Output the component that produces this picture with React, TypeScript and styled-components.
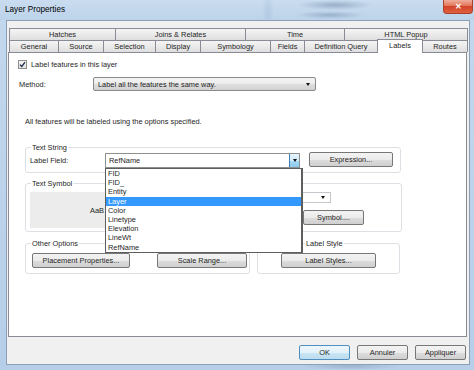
import React from "react";
import styled, { createGlobalStyle, css } from "styled-components";

const GlobalStyle = createGlobalStyle`
  html, body { margin: 0; padding: 0; }
  body {
    font-family: "Liberation Sans", Arial, sans-serif;
    font-size: 7.4px;
    color: #1e1e1e;
    background: #bcd3ea;
  }
`;

const backTabs = [
  { label: "Hatches", w: 106 },
  { label: "Joins & Relates", w: 130 },
  { label: "Time", w: 99 },
  { label: "HTML Popup", w: 123 },
];

const frontTabs = [
  { label: "General", w: 49 },
  { label: "Source", w: 45 },
  { label: "Selection", w: 52 },
  { label: "Display", w: 45 },
  { label: "Symbology", w: 70 },
  { label: "Fields", w: 34 },
  { label: "Definition Query", w: 73 },
  { label: "Labels", w: 45, active: true },
  { label: "Routes", w: 45 },
];

const fields = [
  "FID",
  "FID_",
  "Entity",
  "Layer",
  "Color",
  "Linetype",
  "Elevation",
  "LineWt",
  "RefName",
];

const Window = styled.div`
  width: 474px;
  height: 370px;
  display: flex;
  flex-direction: column;
  overflow: hidden;
  background:
    radial-gradient(ellipse 50px 4px at 350px 366px, rgba(80, 100, 130, 0.25), transparent),
    linear-gradient(#c3d8ed, #b6cee8);
`;

const TitleBar = styled.div`
  height: 20px;
  flex: 0 0 20px;
  display: flex;
  justify-content: space-between;
  align-items: flex-start;
  padding-left: 5px;
  background:
    radial-gradient(ellipse 38px 5px at 335px 5px, rgba(70, 95, 130, 0.35), transparent),
    radial-gradient(ellipse 34px 4px at 330px 15px, rgba(70, 95, 130, 0.3), transparent),
    radial-gradient(ellipse 6px 20px at 268px 10px, rgba(120, 150, 190, 0.2), transparent),
    linear-gradient(#cadcef, #bcd3ea);
`;

const Title = styled.span`
  font-size: 8.2px;
  line-height: 10px;
  padding-top: 5px;
  color: #000;
`;

const CloseButton = styled.div`
  width: 30px;
  height: 14px;
  margin-right: 1px;
  border: 1px solid #a8402a;
  border-top: none;
  border-radius: 0 0 4px 4px;
  box-sizing: border-box;
  display: flex;
  align-items: center;
  justify-content: center;
  color: #fff;
  font-size: 8px;
  font-weight: bold;
  background: linear-gradient(#efae9c, #e27559 45%, #d2432a 50%, #e0623f);
`;

const Client = styled.div`
  flex: 1;
  margin: 0 4px 5px 6px;
  border: 1px solid #8c9fb6;
  background: #f0f0f0;
  display: flex;
  flex-direction: column;
`;

const TabArea = styled.div`
  margin: 7px 2px 0 1px;
  display: flex;
  flex-direction: column;
`;

const TabRow = styled.div`
  display: flex;
  height: 12px;
  padding-left: 1px;
  align-items: flex-start;
`;

const Tab = styled.div<{ $w: number; $active?: boolean }>`
  width: ${(p) => p.$w + 1}px;
  margin-right: -1px;
  height: 12px;
  box-sizing: border-box;
  border: 1px solid #898c95;
  border-bottom: none;
  display: flex;
  justify-content: center;
  align-items: flex-start;
  padding-top: 0.5px;
  line-height: 9px;
  white-space: nowrap;
  background: linear-gradient(#f4f4f4, #e9e9e9 55%, #dedede);
  ${(p) =>
    p.$active &&
    css`
      position: relative;
      z-index: 2;
      margin-top: -1px;
      height: 14px;
      padding-top: 1px;
      background: #fff;
    `}
`;

const Panel = styled.div`
  height: 285px;
  box-sizing: border-box;
  border: 1px solid #898c95;
  background: #fff;
`;

const CheckRow = styled.label`
  display: flex;
  align-items: center;
  gap: 4px;
  height: 9px;
  margin-top: 7px;
  padding-left: 9px;
`;

const CheckBox = styled.span`
  width: 9px;
  height: 9px;
  box-sizing: border-box;
  border: 1px solid #8f8f8f;
  background: linear-gradient(#f6f6f6, #e2e2e2);
  display: flex;
  align-items: center;
  justify-content: center;
`;

const MethodRow = styled.div`
  display: flex;
  align-items: center;
  height: 14px;
  margin-top: 8px;
  padding-left: 10px;
`;

const FieldLabel = styled.span<{ $w: number }>`
  width: ${(p) => p.$w}px;
  flex: 0 0 ${(p) => p.$w}px;
  line-height: 15px;
`;

const SelectButton = styled.div<{ $w: number }>`
  width: ${(p) => p.$w}px;
  height: 14px;
  box-sizing: border-box;
  border: 1px solid #8a8a8a;
  border-radius: 2px;
  padding: 0 5px 0 4px;
  display: flex;
  align-items: center;
  justify-content: space-between;
  background: linear-gradient(#f4f4f4, #ebebeb 50%, #dedede 51%, #d2d2d2);
`;

const Arrow = styled.span`
  width: 0;
  height: 0;
  border-left: 2.5px solid transparent;
  border-right: 2.5px solid transparent;
  border-top: 3px solid #111;
`;

const InfoText = styled.div`
  margin-top: 26px;
  height: 10px;
  line-height: 10px;
  padding-left: 16px;
`;

const GroupBox = styled.div<{ $w: number; $h: number; $top: number }>`
  position: relative;
  width: ${(p) => p.$w}px;
  height: ${(p) => p.$h}px;
  margin-top: ${(p) => p.$top}px;
  box-sizing: border-box;
  border: 1px solid #dcdfe3;
  border-radius: 3px;
  display: flex;
  align-items: flex-start;
`;

const Legend = styled.span<{ $left: number }>`
  position: absolute;
  top: -5px;
  left: ${(p) => p.$left}px;
  line-height: 9px;
  padding: 0 1px;
  background: #fff;
`;

const StringGroup = styled(GroupBox)`
  margin-left: 16px;
  padding: 5px 0 0 4px;
`;

const SymbolGroup = styled(GroupBox)`
  margin-left: 16px;
  padding: 8px 0 0 4px;
`;

const ComboWrap = styled.div`
  position: relative;
  width: 195px;
  height: 15px;
`;

const ComboBox = styled.div`
  height: 15px;
  box-sizing: border-box;
  border: 1px solid #8e8f8f;
  background: #fff;
  display: flex;
  align-items: center;
  justify-content: space-between;
  padding-left: 3px;
`;

const ComboButton = styled.span`
  width: 10px;
  height: 13px;
  box-sizing: border-box;
  border-left: 1px solid #3c7fb1;
  display: flex;
  align-items: center;
  justify-content: center;
  background: linear-gradient(#e6f4fc, #cfeafa 50%, #a9dbf6 51%, #8ac9ec);
`;

const DropList = styled.ul`
  position: absolute;
  top: 15px;
  left: 0;
  z-index: 5;
  width: 198px;
  height: 85px;
  margin: 0;
  padding: 0;
  list-style: none;
  box-sizing: border-box;
  border: 1px solid #5e5e5e;
  border-right-width: 2px;
  background: #fff;
  overflow: hidden;
`;

const ListItem = styled.li<{ $selected?: boolean }>`
  height: 9.2px;
  line-height: 9.2px;
  padding-left: 2px;
  ${(p) =>
    p.$selected &&
    css`
      background: #3399ff;
      color: #fff;
    `}
`;

const Button = styled.div<{ $w: number; $default?: boolean }>`
  width: ${(p) => p.$w}px;
  height: 15px;
  flex: 0 0 auto;
  box-sizing: border-box;
  border: 1px solid #777;
  border-radius: 2px;
  display: flex;
  align-items: center;
  justify-content: center;
  white-space: nowrap;
  background: linear-gradient(#f3f3f3, #ebebeb 50%, #dddddd 51%, #cfcfcf);
  ${(p) =>
    p.$default &&
    css`
      border-color: #4f8fbf;
      background: linear-gradient(#eef7fc, #e2f1fa 50%, #cbe6f5 51%, #bcdcef);
    `}
`;

const Preview = styled.div`
  width: 165px;
  height: 36px;
  box-sizing: border-box;
  padding-left: 60px;
  background: #ececec;
  display: flex;
  align-items: center;
`;

const SymbolSide = styled.div`
  display: flex;
  flex-direction: column;
  margin-left: 10px;
`;

const SmallCombo = styled.div`
  width: 126px;
  height: 11px;
  box-sizing: border-box;
  border: 1px solid #c4c6cb;
  background: #fff;
  display: flex;
  align-items: center;
  justify-content: flex-end;
  padding-right: 5px;
`;

const BottomRow = styled.div`
  display: flex;
  gap: 7px;
  padding-left: 16px;
`;

const OptionsGroup = styled(GroupBox)`
  padding: 9px 0 0 6px;
  gap: 27px;
`;

const StyleGroup = styled(GroupBox)`
  padding-top: 9px;
  justify-content: center;
`;

const Footer = styled.div`
  display: flex;
  justify-content: flex-end;
  gap: 7px;
  margin-top: 8px;
  padding-right: 3px;
`;

const Check = () => (
  <svg width="7" height="7" viewBox="0 0 7 7">
    <path d="M1 3.6 L2.8 5.4 L6 1.2" fill="none" stroke="#1c2d4a" strokeWidth="1.3" />
  </svg>
);

export default function App() {
  return (
    <>
      <GlobalStyle />
      <Window>
        <TitleBar>
          <Title>Layer Properties</Title>
          <CloseButton>✕</CloseButton>
        </TitleBar>
        <Client>
          <TabArea>
            <TabRow>
              {backTabs.map((t) => (
                <Tab key={t.label} $w={t.w}>
                  {t.label}
                </Tab>
              ))}
            </TabRow>
            <TabRow>
              {frontTabs.map((t) => (
                <Tab key={t.label} $w={t.w} $active={t.active}>
                  {t.label}
                </Tab>
              ))}
            </TabRow>
            <Panel>
              <CheckRow>
                <CheckBox>
                  <Check />
                </CheckBox>
                Label features in this layer
              </CheckRow>
              <MethodRow>
                <FieldLabel $w={74}>Method:</FieldLabel>
                <SelectButton $w={223}>
                  Label all the features the same way.
                  <Arrow />
                </SelectButton>
              </MethodRow>
              <InfoText>All features will be labeled using the options specified.</InfoText>

              <StringGroup $w={376} $h={26} $top={20}>
                <Legend $left={5}>Text String</Legend>
                <FieldLabel $w={75}>Label Field:</FieldLabel>
                <ComboWrap>
                  <ComboBox>
                    RefName
                    <ComboButton>
                      <Arrow />
                    </ComboButton>
                  </ComboBox>
                  <DropList>
                    {fields.map((f) => (
                      <ListItem key={f} $selected={f === "Layer"}>
                        {f}
                      </ListItem>
                    ))}
                  </DropList>
                </ComboWrap>
                <Button $w={84} style={{ marginLeft: 9, marginTop: -1 }}>
                  Expression...
                </Button>
              </StringGroup>

              <SymbolGroup $w={377} $h={49} $top={10}>
                <Legend $left={5}>Text Symbol</Legend>
                <Preview>AaB</Preview>
                <SymbolSide>
                  <SmallCombo>
                    <Arrow />
                  </SmallCombo>
                  <Button $w={61} style={{ marginTop: 7, marginLeft: 98 }}>
                    Symbol....
                  </Button>
                </SymbolSide>
              </SymbolGroup>

              <BottomRow>
                <OptionsGroup $w={225} $h={31} $top={11}>
                  <Legend $left={5}>Other Options</Legend>
                  <Button $w={98}>Placement Properties...</Button>
                  <Button $w={90}>Scale Range...</Button>
                </OptionsGroup>
                <StyleGroup $w={143} $h={31} $top={11}>
                  <Legend $left={47}>Label Style</Legend>
                  <Button $w={95}>Label Styles...</Button>
                </StyleGroup>
              </BottomRow>
            </Panel>
          </TabArea>
          <Footer>
            <Button $w={51} $default>
              OK
            </Button>
            <Button $w={51}>Annuler</Button>
            <Button $w={51}>Appliquer</Button>
          </Footer>
        </Client>
      </Window>
    </>
  );
}
